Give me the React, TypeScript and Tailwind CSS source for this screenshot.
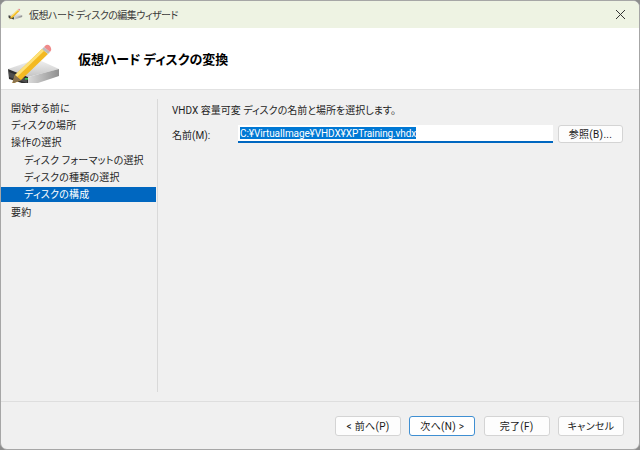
const font = { fontFamily: 'Roboto, "Noto Sans CJK JP", sans-serif' };

const navItems = [
  { label: "開始する前に" },
  { label: "ディスクの場所" },
  { label: "操作の選択" },
  { label: "ディスク フォーマットの選択", sub: true },
  { label: "ディスクの種類の選択", sub: true },
  { label: "ディスクの構成", sub: true, active: true },
  { label: "要約" },
];

const DiskIcon = ({ w, id, box }: { w: number; id: string; box: string }) => (
  <svg width={w} height={(w * 48) / 56} viewBox={box}>
    <defs>
      <linearGradient id={id + "top"} x1="0" y1="0" x2="0" y2="1">
        <stop offset="0" stopColor="#f4f4f4" />
        <stop offset="1" stopColor="#c4c4c4" />
      </linearGradient>
      <linearGradient id={id + "side"} x1="0" y1="0" x2="1" y2="0">
        <stop offset="0" stopColor="#dadada" />
        <stop offset="1" stopColor="#8f8f8f" />
      </linearGradient>
    </defs>
    <path d="M8 39 L37 29 L59 39 L28 47 Z" fill={`url(#${id}top)`} />
    <path d="M28 47 L59 39 L59 46 L32 55 L28 55 Z" fill={`url(#${id}side)`} />
    <path d="M8 39 L28 47 L28 55 L9 49 Z" fill="#2e2e2e" />
    <path d="M9 42 L27 49 L27 53 L9 47 Z" fill="#4e4e4e" />
    <rect x="25" y="48" width="3" height="1.6" fill="#38c850" />
    <path d="M12 54 L15 45 L42 19 L48 24 L21 50 Z" fill="#f3b922" />
    <path d="M15 45 L42 19 L44 21 L17 47 Z" fill="#fde27a" />
    <path d="M12 54 L15 45 L21 50 Z" fill="#8a7350" />
    <path d="M42 19 L44 17 L50 22 L48 24 Z" fill="#bdbdbd" />
    <path d="M44 17 L46 15 Q48 14 50 16 L51 18 Q52 20 50 22 Z" fill="#ef8a8a" />
  </svg>
);

const Btn = ({ children, focus }: { children: string; focus?: boolean }) => (
  <button
    className={
      focus
        ? "w-[66px] h-[20px] pt-[1px] rounded-[3px] bg-white border border-[#3f8fd2] text-[10px] tracking-[0.3px] text-[#1a1a1a] flex items-center justify-center"
        : "w-[66px] h-[20px] pt-[1px] rounded-[3px] bg-[#fdfdfd] border border-[#d4d4d4] text-[10px] tracking-[0.3px] text-[#1a1a1a] flex items-center justify-center"
    }
  >
    {children}
  </button>
);

export default function App() {
  return (
    <div style={font} className="w-[640px] h-[450px] overflow-hidden bg-[#8d8d8d] [font-feature-settings:'palt']">
      <div className="w-[640px] h-[450px] flex flex-col overflow-hidden rounded-[7px] border border-[#a6a6a6] bg-[#f0f0f0]">
        <div className="h-[27px] shrink-0 flex items-center bg-[#eef3e3] pl-[7px] pr-[13px]">
          <DiskIcon w={15} id="s" box="6 12 56 48" />
          <span className="ml-[6px] pt-[2px] text-[10px] tracking-[-0.5px] text-[#3a3a3a]">仮想ハード ディスクの編集ウィザード</span>
          <svg className="ml-auto" width="11" height="11" viewBox="0 0 11 11">
            <path d="M1 1 L10 10 M10 1 L1 10" stroke="#333" strokeWidth="1" fill="none" />
          </svg>
        </div>

        <div className="h-[62px] shrink-0 flex items-center bg-white border-b border-[#e2e2e2] pl-[5px]">
          <DiskIcon w={56} id="b" box="6 5 56 48" />
          <h1 className="ml-[16px] pt-[2px] text-[13px] font-bold text-black">仮想ハード ディスクの変換</h1>
        </div>

        <div className="flex-1 flex min-h-0 border-b border-[#dedede]">
          <nav className="w-[157px] shrink-0 my-[9px] border-r border-[#d9d9d9]">
            {navItems.map((item) => (
              <div key={item.label} className="h-[17.35px] flex items-center">
                <div
                  className={
                    "w-[155px] h-[15px] pt-[1px] flex items-center text-[10px] tracking-[0.2px] whitespace-nowrap " +
                    (item.sub ? "pl-[23px] " : "pl-[10px] ") +
                    (item.active ? "bg-[#0067c0] text-white" : "text-[#1f1f1f]")
                  }
                >
                  {item.label}
                </div>
              </div>
            ))}
          </nav>
          <main className="flex-1 pl-[14px] pr-[15px] pt-[11px]">
            <p className="h-[17px] pt-[2px] flex items-center text-[10px] text-[#1f1f1f]">
              VHDX 容量可変 ディスクの名前と場所を選択します。
            </p>
            <div className="mt-[7px] flex items-center">
              <label className="w-[66px] pt-[2px] text-[10px] text-[#1f1f1f]">名前(M):</label>
              <div className="w-[315px] h-[18px] bg-white border-b-2 border-[#0067c0] flex items-center pl-[2px] text-[10px]">
                <span className="bg-[#0078d4] text-white leading-[11px] pt-[1px] tracking-[-0.1px] whitespace-nowrap">C:¥VirtualImage¥VHDX¥XPTraining.vhdx</span>
              </div>
              <button className="ml-[5px] w-[65px] h-[18px] pt-[1px] rounded-[3px] bg-[#fdfdfd] border border-[#d4d4d4] text-[10px] tracking-[0.3px] text-[#1a1a1a] flex items-center justify-center">
                参照(B)...
              </button>
            </div>
          </main>
        </div>

        <div className="h-[47px] shrink-0 flex items-start justify-end gap-[8.33px] pt-[14px] pr-[15px]">
          <Btn>{"< 前へ(P)"}</Btn>
          <Btn focus>{"次へ(N) >"}</Btn>
          <Btn>完了(F)</Btn>
          <Btn>キャンセル</Btn>
        </div>
      </div>
    </div>
  );
}
